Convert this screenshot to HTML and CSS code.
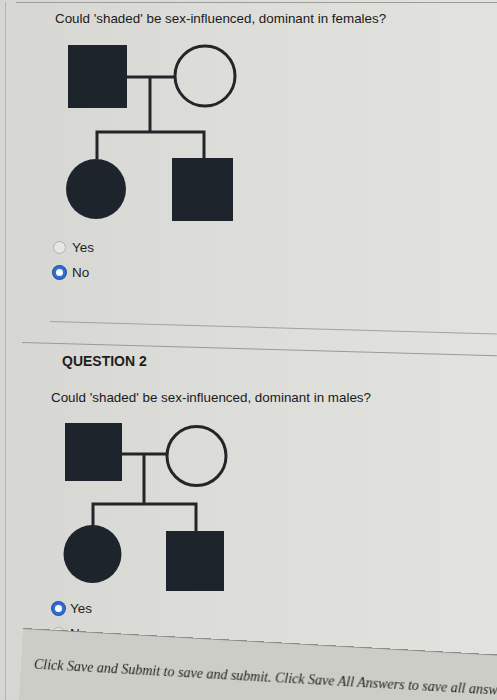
FILE: index.html
```html
<!DOCTYPE html>
<html lang="en">
<head>
<meta charset="utf-8">
<title>Question</title>
<link rel="stylesheet" href="styles.css">
</head>
<body>
<div class="frame">
  <div class="prev-edge"></div>
  <section class="q q1">
    <p class="qtext">Could 'shaded' be sex-influenced, dominant in females?</p>
    <svg class="ped ped1" viewBox="60 40 180 185" width="180" height="185" aria-hidden="true">
      <rect x="68" y="45" width="59" height="63" fill="#1d242c"/>
      <circle cx="205" cy="76" r="30" fill="none" stroke="#232629" stroke-width="3"/>
      <line x1="127" y1="77" x2="175" y2="77" stroke="#232629" stroke-width="3"/>
      <line x1="150" y1="77" x2="150" y2="132" stroke="#232629" stroke-width="3"/>
      <polyline points="97,159 97,132 204,132 204,159" fill="none" stroke="#232629" stroke-width="3"/>
      <circle cx="96" cy="189" r="30" fill="#1d242c"/>
      <rect x="172" y="158" width="61" height="63" fill="#1d242c"/>
    </svg>
    <ul class="opts">
      <li class="opt"><span class="radio"></span><span class="label">Yes</span></li>
      <li class="opt"><span class="radio on"></span><span class="label">No</span></li>
    </ul>
  </section>
  <hr class="rule rule1">
  <hr class="rule rule2">
  <section class="q q2">
    <h2 class="qtitle">QUESTION 2</h2>
    <p class="qtext">Could 'shaded' be sex-influenced, dominant in males?</p>
    <svg class="ped ped2" viewBox="58 418 175 178" width="175" height="178" aria-hidden="true">
      <rect x="65" y="423" width="57" height="58" fill="#1d242c"/>
      <circle cx="196.5" cy="456" r="29.5" fill="none" stroke="#232629" stroke-width="3"/>
      <line x1="122" y1="454" x2="167" y2="454" stroke="#232629" stroke-width="3"/>
      <line x1="144" y1="454" x2="144" y2="504" stroke="#232629" stroke-width="3"/>
      <polyline points="93,527 93,504 196,504 196,532" fill="none" stroke="#232629" stroke-width="3"/>
      <circle cx="92.5" cy="554" r="29" fill="#1d242c"/>
      <rect x="166" y="531" width="58" height="60" fill="#1d242c"/>
    </svg>
    <ul class="opts">
      <li class="opt"><span class="radio on"></span><span class="label">Yes</span></li>
      <li class="opt"><span class="radio"></span><span class="label">No</span></li>
    </ul>
  </section>
</div>
<footer class="savebar">
  <p class="savetext">Click Save and Submit to save and submit. Click Save All Answers to save all answers.</p>
</footer>
</body>
</html>
```
FILE: styles.css
```css
html, body {
  margin: 0;
  padding: 0;
  height: 100%;
}
body {
  background: linear-gradient(90deg, #d6d6d2 0%, #dcdcd8 40%, #e2e2de 100%);
  font-family: "Liberation Sans", Arial, sans-serif;
  color: #222;
  overflow: hidden;
}
.frame {
  margin-left: 5px;
  border-left: 1px solid #b4b4b0;
  min-height: 700px;
  box-sizing: border-box;
}
.prev-edge {
  margin-left: 10px;
  margin-top: 2px;
  border-top: 1px solid #9c9c98;
  height: 0;
}
.q1 .qtext {
  margin: 8px 0 0 49px;
}
.qtext {
  font-size: 13.4px;
  line-height: 16px;
  color: #1a1a1a;
}
.ped {
  display: block;
}
.ped1 {
  margin: 13px 0 0 54px;
}
.opts {
  list-style: none;
  margin: 0;
  padding: 0;
}
.q1 .opts {
  margin: 10px 0 0 47px;
}
.opt {
  display: flex;
  align-items: center;
  gap: 6px;
  height: 25px;
}
.radio {
  width: 11px;
  height: 11px;
  border-radius: 50%;
  border: 1px solid #b0b0ad;
  background: #e6e6e3;
  flex: none;
}
.radio.on {
  width: 7px;
  height: 7px;
  border: 3px solid #2c6fd9;
  background: #ffffff;
  box-shadow: 0 0 0 1px #2a4f8a;
}
.label {
  font-size: 13.5px;
  color: #1e1e1e;
}
.rule {
  border: 0;
  height: 0;
  margin: 0;
  transform-origin: left center;
  transform: rotate(1.6deg);
}
.rule1 {
  margin: 36px 0 0 44px;
  border-top: 1px solid #a2a29e;
}
.rule2 {
  margin: 20px 0 0 16px;
  border-top: 1px solid #9a9a96;
}
.qtitle {
  margin: 9px 0 0 56px;
  font-size: 14px;
  line-height: 18px;
  font-weight: bold;
  color: #1e1e1e;
}
.q2 .qtext {
  margin: 20px 0 0 45px;
}
.ped2 {
  margin: 12px 0 0 52px;
}
.q2 .opts {
  margin: 0 0 0 46px;
}
.q2 .opt .label {
  margin-left: -1px;
}
.savebar {
  position: fixed;
  left: 23px;
  top: 628px;
  width: 500px;
  height: 110px;
  background: #cdcdc8;
  border-top: 1px solid #8c8c88;
  overflow: hidden;
  transform-origin: left top;
  transform: rotate(3.2deg);
}
.savetext {
  margin: 27px 0 0 13px;
  white-space: nowrap;
  font-family: "Liberation Serif", "Times New Roman", serif;
  font-style: italic;
  font-size: 14px;
  color: #222;
}
```
